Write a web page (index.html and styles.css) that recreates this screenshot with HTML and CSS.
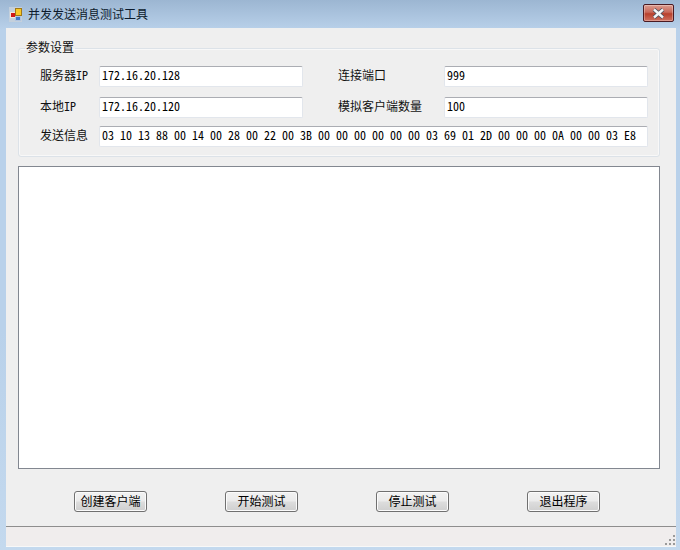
FILE: index.html
```html
<!DOCTYPE html>
<html lang="zh-CN">
<head>
<meta charset="UTF-8">
<title>并发发送消息测试工具</title>
<link rel="stylesheet" href="styles.css">
</head>
<body>
<div class="window">
    <div class="titlebar">
        <svg class="app-icon" width="16" height="16" viewBox="0 0 16 16">
            <rect x="0" y="0" width="13" height="15" fill="#c4d0dc"/>
            <rect x="1.5" y="5.5" width="5" height="5" fill="#d01818" stroke="#f0e8e0"/>
            <rect x="6.5" y="1.5" width="6" height="7" fill="#f8c828" stroke="#a07818"/>
            <rect x="6.5" y="9.5" width="5" height="4" fill="#4078c8" stroke="#b0c4e0"/>
        </svg>
        <span class="title">并发发送消息测试工具</span>
        <button class="close-btn">
            <svg width="15" height="11" viewBox="0 0 15 11">
                <path d="M3 1.5 L12 9.5 M12 1.5 L3 9.5" stroke="#46505e" stroke-width="4" fill="none"/>
                <path d="M3 1.5 L12 9.5 M12 1.5 L3 9.5" stroke="#f4f6f8" stroke-width="2.4" fill="none"/>
            </svg>
        </button>
    </div>
    <div class="client">
        <fieldset class="settings">
            <legend>参数设置</legend>
            <div class="row row-first">
                <label class="label">服务器IP</label>
                <input class="field" type="text" value="172.16.20.128">
                <label class="label label-right">连接端口</label>
                <input class="field" type="text" value="999">
            </div>
            <div class="row row-second">
                <label class="label">本地IP</label>
                <input class="field" type="text" value="172.16.20.120">
                <label class="label label-right">模拟客户端数量</label>
                <input class="field" type="text" value="100">
            </div>
            <div class="row row-third">
                <label class="label">发送信息</label>
                <input class="field field-wide" type="text" value="03 10 13 88 00 14 00 28 00 22 00 3B 00 00 00 00 00 00 03 69 01 2D 00 00 00 0A 00 00 03 E8">
            </div>
        </fieldset>
        <div class="log"></div>
        <div class="buttons">
            <button class="button">创建客户端</button>
            <button class="button">开始测试</button>
            <button class="button">停止测试</button>
            <button class="button">退出程序</button>
        </div>
        <div class="statusbar">
            <svg class="grip" width="12" height="12" viewBox="0 0 12 12">
                <rect x="9" y="1" width="2" height="2" fill="#9a9a9a"/>
                <rect x="5" y="5" width="2" height="2" fill="#9a9a9a"/>
                <rect x="9" y="5" width="2" height="2" fill="#9a9a9a"/>
                <rect x="1" y="9" width="2" height="2" fill="#9a9a9a"/>
                <rect x="5" y="9" width="2" height="2" fill="#9a9a9a"/>
                <rect x="9" y="9" width="2" height="2" fill="#9a9a9a"/>
            </svg>
        </div>
    </div>
</div>
</body>
</html>
```

FILE: styles.css
```css
html, body {
    margin: 0;
    height: 100%;
}

body {
    font-family: "Noto Sans CJK SC", "Liberation Sans", sans-serif;
    font-size: 12px;
    font-feature-settings: "hwid";
    color: #111;
    overflow: hidden;
}

.window {
    width: 680px;
    height: 550px;
    box-sizing: border-box;
    padding: 0 4px 3px 6px;
    display: flex;
    flex-direction: column;
    background: linear-gradient(to bottom, #9cb6d2 0, #b9d1ea 30px, #b9d1ea 330px, #c4d9ee 100%);
}

.titlebar {
    height: 28px;
    flex: none;
    display: flex;
    align-items: center;
    margin-left: -6px;
    margin-right: -4px;
    padding-left: 9px;
    box-sizing: border-box;
}

.app-icon {
    flex: none;
    margin-top: 1px;
}

.title {
    margin-left: 3px;
    margin-top: -1px;
    color: #0c1a2c;
    line-height: 16px;
}

.close-btn {
    margin-left: auto;
    margin-right: 6px;
    margin-top: -2px;
    width: 31px;
    height: 18px;
    padding: 0;
    border: 1px solid #4a1a22;
    border-radius: 2px;
    background: linear-gradient(to bottom, #dc9c90 0, #c8685a 45%, #b8402c 55%, #cf7060 100%);
    box-shadow: inset 0 0 0 1px rgba(255, 255, 255, 0.3);
    display: flex;
    align-items: center;
    justify-content: center;
}

.client {
    flex: 1;
    display: flex;
    flex-direction: column;
    background-color: #efefef;
    min-height: 0;
}

.settings {
    margin: 13px 16px 0 12px;
    padding: 0;
    height: 116px;
    box-sizing: border-box;
    border: 1px solid #dce2e8;
    border-radius: 3px;
    min-width: 0;
    box-shadow: inset 0 0 0 1px #f8f8f8;
}

.settings legend {
    margin-left: 6px;
    padding: 0 1px 2px;
    line-height: 12px;
}

.row {
    display: grid;
    grid-template-columns: 59px 204px 35px 106px 204px;
    align-items: center;
    padding-left: 21px;
    height: 21px;
}

.row-first {
    margin-top: 11px;
}

.row-second {
    margin-top: 10px;
}

.row-third {
    margin-top: 8px;
    grid-template-columns: 59px 549px;
}

.label {
    line-height: 16px;
    padding-bottom: 3px;
    white-space: nowrap;
}

.label-right {
    grid-column: 4;
}

.field {
    height: 21px;
    box-sizing: border-box;
    margin: 0;
    padding: 0 2px 5px;
    border: 1px solid #e2e6ec;
    border-top-color: #abadb3;
    border-radius: 2px;
    background-color: #fff;
    font-family: "Noto Sans CJK SC", sans-serif;
    font-size: 12px;
    line-height: 14px;
    font-feature-settings: "hwid";
    color: #000;
    outline: none;
    width: 100%;
}

.log {
    margin: 9px 16px 0 12px;
    height: 303px;
    box-sizing: border-box;
    background-color: #fff;
    border: 1px solid #828790;
    flex: none;
}

.buttons {
    margin: 22px 0 0 68px;
    display: flex;
    gap: 78px;
}

.button {
    width: 73px;
    height: 21px;
    padding: 0 0 2px;
    box-sizing: border-box;
    border: 1px solid #707070;
    border-radius: 3px;
    background: linear-gradient(to bottom, #f2f2f2 0, #ebebeb 48%, #dddddd 52%, #cfcfcf 100%);
    box-shadow: inset 0 0 0 1px #fbfbfb;
    font-family: "Noto Sans CJK SC", sans-serif;
    font-size: 12px;
    color: #000;
}

.statusbar {
    margin-top: auto;
    height: 21px;
    flex: none;
    box-sizing: border-box;
    border-top: 1px solid #8e8e8e;
    border-bottom: 1px solid #f8f8f8;
    background-color: #f0eded;
    display: flex;
    justify-content: flex-end;
    align-items: flex-end;
}
```
